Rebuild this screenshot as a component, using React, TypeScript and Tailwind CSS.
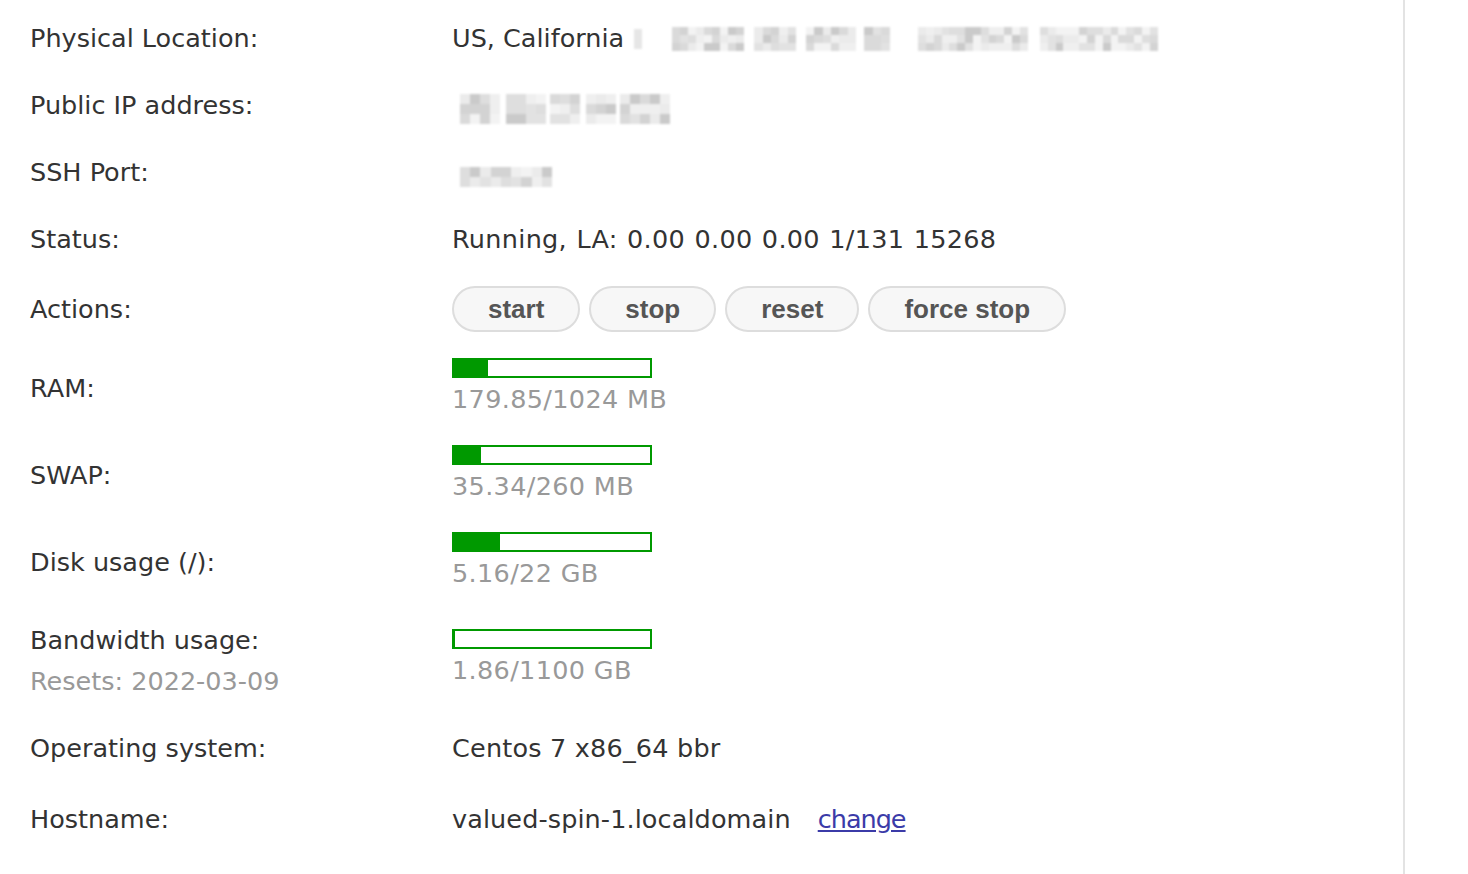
import React from "react";

const font = { fontFamily: '"DejaVu Sans", Verdana, sans-serif' };

const shades = ["#f3f3f3", "#ebebeb", "#e2e2e2", "#dadada", "#d3d3d3", "#efefef", "#dedede", "#cacaca"];

function Mosaic({ segs, rows, seed, cell = 9 }: { segs: [number, number][]; rows: number; seed: number; cell?: number }) {
  let s = seed;
  const rnd = () => {
    s = (s * 9301 + 49297) % 233280;
    return s / 233280;
  };
  return (
    <div className="flex items-center blur-[1.2px]">
      {segs.map(([w, ml], i) => {
        const cols = Math.max(1, Math.round(w / cell));
        return (
          <div
            key={i}
            className="grid"
            style={{ marginLeft: ml, gridTemplateColumns: `repeat(${cols}, ${w / cols}px)` }}
          >
            {Array.from({ length: cols * rows }).map((_, j) => (
              <div key={j} style={{ height: cell, background: shades[Math.floor(rnd() * shades.length)] }} />
            ))}
          </div>
        );
      })}
    </div>
  );
}

function Bar({ pct, label }: { pct: number; label: string }) {
  return (
    <div className="flex flex-col">
      <div className="w-[200px] h-[20px] border-2 border-[#009900] bg-white">
        <div className="h-full bg-[#009900]" style={{ width: `${pct}%` }} />
      </div>
      <div className="text-[#999999] leading-[42px] tracking-[0.35px]">{label}</div>
    </div>
  );
}

function Row({ label, h, children }: { label: React.ReactNode; h: string; children?: React.ReactNode }) {
  return (
    <div className={`flex items-center ${h}`}>
      <div className="w-[422px] shrink-0">{label}</div>
      <div className="flex items-center">{children}</div>
    </div>
  );
}

function Btn({ children }: { children: React.ReactNode }) {
  return (
    <button
      className="h-[46px] px-[34px] rounded-full border-2 border-[#dddddd] bg-[#f7f7f7] text-[#555555] font-bold text-[26px] leading-none"
      style={{ fontFamily: '"Liberation Sans", Arial, sans-serif' }}
    >
      {children}
    </button>
  );
}

export default function App() {
  return (
    <div className="w-[1468px] h-[874px] bg-white overflow-hidden flex text-[#333333] text-[25.5px]" style={font}>
      <div className="w-[1405px] h-full border-r-2 border-[#e3e3e3] pl-[30px] pt-[5px]">
        <Row label="Physical Location:" h="h-[67px]">
          <span>US, California</span>
          <div className="ml-[10px] w-[8px] h-[20px] bg-[#e6e6e6] blur-[0.8px]" />
          <div className="ml-[30px]">
            <Mosaic
              rows={3}
              seed={7}
              cell={8}
              segs={[
                [72, 0],
                [42, 10],
                [50, 10],
                [26, 8],
                [110, 28],
                [118, 12],
              ]}
            />
          </div>
        </Row>
        <Row label="Public IP address:" h="h-[67px]">
          <div className="ml-[8px] mt-[7px]">
            <Mosaic rows={3} seed={23} cell={10} segs={[[40, 0], [40, 6], [30, 4], [30, 6], [50, 4]]} />
          </div>
        </Row>
        <Row label="SSH Port:" h="h-[67px]">
          <div className="ml-[8px] mt-[8px]">
            <Mosaic rows={2} seed={41} cell={10} segs={[[92, 0]]} />
          </div>
        </Row>
        <Row label="Status:" h="h-[67px]">
          <span className="tracking-[0.3px] [word-spacing:1px]">Running, LA: 0.00 0.00 0.00 1/131 15268</span>
        </Row>
        <Row label="Actions:" h="h-[72px]">
          <div className="flex gap-[9px]">
            <Btn>start</Btn>
            <Btn>stop</Btn>
            <Btn>reset</Btn>
            <Btn>force stop</Btn>
          </div>
        </Row>
        <Row label="RAM:" h="h-[87px]">
          <Bar pct={17.6} label="179.85/1024 MB" />
        </Row>
        <Row label="SWAP:" h="h-[87px]">
          <Bar pct={13.6} label="35.34/260 MB" />
        </Row>
        <Row label="Disk usage (/):" h="h-[87px]">
          <Bar pct={23.5} label="5.16/22 GB" />
        </Row>
        <Row
          label={
            <div className="flex flex-col leading-[41px]">
              <span>Bandwidth usage:</span>
              <span className="text-[#999999]">Resets: 2022-03-09</span>
            </div>
          }
          h="h-[110px]"
        >
          <div className="-mt-[2px]">
            <Bar pct={0.17} label="1.86/1100 GB" />
          </div>
        </Row>
        <Row label="Operating system:" h="h-[64px]">
          <span className="tracking-[0.2px]">Centos 7 x86_64 bbr</span>
        </Row>
        <Row label="Hostname:" h="h-[78px]">
          <span className="tracking-[0.1px]">valued-spin-1.localdomain</span>
          <a href="#" className="ml-[27px] text-[#3b3ba8] underline tracking-[-1px]">
            change
          </a>
        </Row>
      </div>
    </div>
  );
}
